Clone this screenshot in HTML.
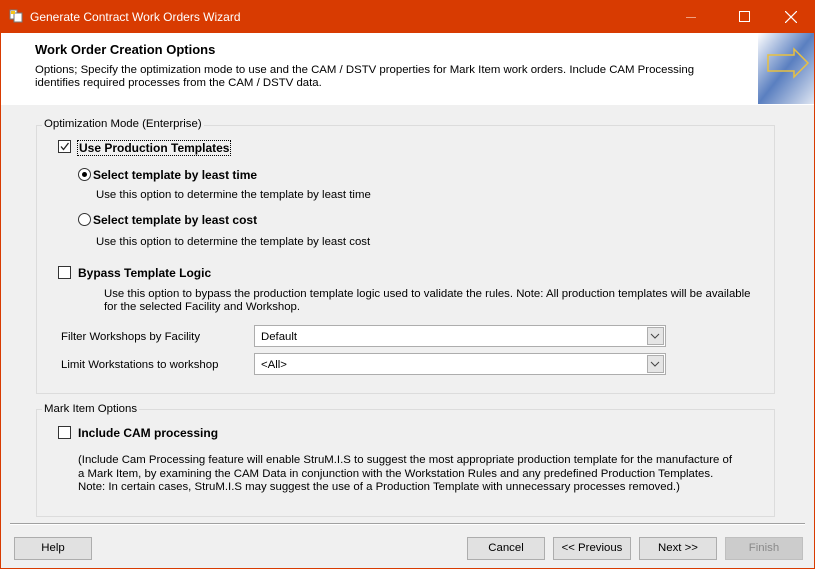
<!DOCTYPE html>
<html><head><style>
*{margin:0;padding:0;box-sizing:border-box}
body{width:815px;height:569px;overflow:hidden;font-family:"Liberation Sans",sans-serif;font-size:11.4px;color:#000;background:#f0f0f0;position:relative}
.a{position:absolute;white-space:nowrap}
.title{left:0;top:0;width:815px;height:33px;background:#d83b01;color:#fff}
.frame{position:absolute;left:0;top:33px;width:815px;height:536px;border:1px solid #d83b01;border-top:none}
.hdr{left:1px;top:33px;width:813px;height:72px;background:#fff}
.grp{position:absolute;border:1px solid #dcdcdc}
.leg{position:absolute;background:#f0f0f0;padding:0 2px}
.cb{position:absolute;width:13px;height:13px;border:1px solid #333;background:#fff}
.rb{position:absolute;width:13px;height:13px;border:1px solid #333;border-radius:50%;background:#fff}
.b{font-weight:bold}
.combo{position:absolute;height:22px;background:#fff;border:1px solid #adadad;padding:5px 6px}
.combo i{position:absolute;right:1px;top:1px;width:17px;height:18px;border:1px solid #adadad;background:#e5e5e5}
.btn{position:absolute;top:537px;width:78px;height:23px;border:1px solid #adadad;background:#e1e1e1;text-align:center;line-height:21px;font-size:11.4px}
</style></head><body>
<div class="a title"></div>
<svg class="a" style="left:9px;top:9px" width="14" height="14"><rect x="1" y="1" width="7" height="9" fill="#fff" stroke="#777"/><rect x="5" y="4" width="8" height="9" fill="#fff" stroke="#777"/><rect x="2" y="2" width="4" height="3" fill="#f5c518"/></svg>
<div class="a" style="left:30px;top:10px;color:#fff;font-size:12px">Generate Contract Work Orders Wizard</div>
<div class="a" style="left:686px;top:17px;width:10px;height:1px;background:#f0a080"></div>
<div class="a" style="left:739px;top:11px;width:11px;height:11px;border:1px solid #fff"></div>
<svg class="a" style="left:785px;top:11px" width="12" height="12"><path d="M0 0L12 12M12 0L0 12" stroke="#fff" stroke-width="1.2"/></svg>
<div class="frame"></div>
<div class="a hdr"></div>
<svg class="a" style="left:758px;top:33px" width="56" height="71"><defs><linearGradient id="g" x1="0" y1="0" x2="1" y2="1"><stop offset="0" stop-color="#fff"/><stop offset=".5" stop-color="#5a7fc0"/><stop offset="1" stop-color="#dfe6f2"/></linearGradient></defs><rect width="56" height="71" fill="url(#g)"/><path d="M10 22h26v-6l14 14-14 14v-6H10z" fill="none" stroke="#e8c040" stroke-width="1.5"/></svg>
<div class="a b" style="left:35px;top:42px;font-size:13px">Work Order Creation Options</div>
<div class="a" style="left:35px;top:64px;line-height:13px">Options; Specify the optimization mode to use and the CAM / DSTV properties for Mark Item work orders. Include CAM Processing<br>identifies required processes from the CAM / DSTV data.</div>

<div class="grp" style="left:36px;top:125px;width:739px;height:269px"></div>
<div class="leg" style="left:42px;top:118px">Optimization Mode (Enterprise)</div>
<div class="cb" style="left:58px;top:140px"></div>
<svg class="a" style="left:59px;top:141px" width="11" height="11"><path d="M2 5.5l2.5 3L9.5 2" stroke="#222" stroke-width="1.3" fill="none"/></svg>
<div class="a b" style="left:77px;top:140px;font-size:12px;border:1px dotted #000;padding:0 1px">Use Production Templates</div>
<div class="rb" style="left:78px;top:168px"></div><div class="a" style="left:82px;top:172px;width:5px;height:5px;border-radius:50%;background:#000"></div>
<div class="a b" style="left:93px;top:168px;font-size:12px">Select template by least time</div>
<div class="a" style="left:96px;top:189px">Use this option to determine the template by least time</div>
<div class="rb" style="left:78px;top:213px"></div>
<div class="a b" style="left:93px;top:213px;font-size:12px">Select template by least cost</div>
<div class="a" style="left:96px;top:236px">Use this option to determine the template by least cost</div>
<div class="cb" style="left:58px;top:266px"></div>
<div class="a b" style="left:78px;top:266px;font-size:12px">Bypass Template Logic</div>
<div class="a" style="left:104px;top:288px;line-height:13px">Use this option to bypass the production template logic used to validate the rules. Note: All production templates will be available<br>for the selected Facility and Workshop.</div>
<div class="a" style="left:61px;top:331px">Filter Workshops by Facility</div>
<div class="combo" style="left:254px;top:325px;width:412px">Default<i></i></div>
<div class="a" style="left:61px;top:359px">Limit Workstations to workshop</div>
<div class="combo" style="left:254px;top:353px;width:412px">&lt;All&gt;<i></i></div>
<svg class="a" style="left:650px;top:331px" width="10" height="40"><path d="M1 3l4 4 4-4M1 31l4 4 4-4" stroke="#444" fill="none"/></svg>

<div class="grp" style="left:36px;top:409px;width:739px;height:108px"></div>
<div class="leg" style="left:42px;top:403px">Mark Item Options</div>
<div class="cb" style="left:58px;top:426px"></div>
<div class="a b" style="left:78px;top:426px;font-size:12px">Include CAM processing</div>
<div class="a" style="left:78px;top:454px;line-height:13.5px">(Include Cam Processing feature will enable StruM.I.S to suggest the most appropriate production template for the manufacture of<br>a Mark Item, by examining the CAM Data in conjunction with the Workstation Rules and any predefined Production Templates.<br>Note: In certain cases, StruM.I.S may suggest the use of a Production Template with unnecessary processes removed.)</div>

<div class="a" style="left:10px;top:523px;width:795px;height:1px;background:#a0a0a0"></div>
<div class="a" style="left:10px;top:524px;width:795px;height:1px;background:#fff"></div>
<div class="btn" style="left:14px">Help</div>
<div class="btn" style="left:467px">Cancel</div>
<div class="btn" style="left:553px">&lt;&lt; Previous</div>
<div class="btn" style="left:639px">Next &gt;&gt;</div>
<div class="btn" style="left:725px;color:#8a8a8a;background:#ccc;border-color:#bfbfbf">Finish</div>
</body></html>
